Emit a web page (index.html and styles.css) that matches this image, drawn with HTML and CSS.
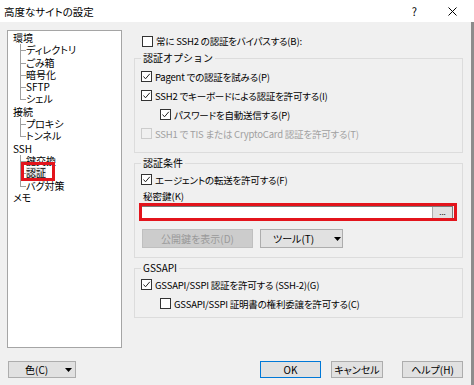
FILE: index.html
```html
<!DOCTYPE html>
<html lang="ja">
<head>
    <meta charset="UTF-8">
    <title>高度なサイトの設定</title>
    <link rel="stylesheet" href="styles.css">
</head>
<body>
    <div class="titlebar">
        <span class="title">高度なサイトの設定</span>
        <span class="help">?</span>
        <svg class="close" width="9" height="9" viewBox="0 0 9 9"><path d="M0.5 0.5L8.5 8.5M8.5 0.5L0.5 8.5" stroke="#000" stroke-width="1"/></svg>
    </div>
    <div class="window">
        <div class="main">
            <div class="tree">
                <div class="node">環境</div>
                <ul class="kids">
                    <li>ディレクトリ</li>
                    <li>ごみ箱</li>
                    <li>暗号化</li>
                    <li>SFTP</li>
                    <li>シェル</li>
                </ul>
                <div class="node">接続</div>
                <ul class="kids">
                    <li>プロキシ</li>
                    <li>トンネル</li>
                </ul>
                <div class="node">SSH</div>
                <ul class="kids">
                    <li>鍵交換</li>
                    <li><span class="sel">認証</span></li>
                    <li>バグ対策</li>
                </ul>
                <div class="node">メモ</div>
            </div>

            <div class="panel">
                <div class="check top-check"><span class="box"></span>常に SSH2 の認証をバイパスする(B):</div>

                <fieldset class="group g1">
                    <legend>認証オプション</legend>
                    <div class="check"><span class="box"><svg viewBox="0 0 9 9"><polyline points="1.5,4.5 3.5,6.8 7.8,1.8"/></svg></span>Pagent での認証を試みる(P)</div>
                    <div class="check"><span class="box"><svg viewBox="0 0 9 9"><polyline points="1.5,4.5 3.5,6.8 7.8,1.8"/></svg></span>SSH2 でキーボードによる認証を許可する(I)</div>
                    <div class="check sub"><span class="box"><svg viewBox="0 0 9 9"><polyline points="1.5,4.5 3.5,6.8 7.8,1.8"/></svg></span>パスワードを自動送信する(P)</div>
                    <div class="check disabled"><span class="box"></span>SSH1 で TIS または CryptoCard 認証を許可する(T)</div>
                </fieldset>

                <fieldset class="group g2">
                    <legend>認証条件</legend>
                    <div class="check"><span class="box"><svg viewBox="0 0 9 9"><polyline points="1.5,4.5 3.5,6.8 7.8,1.8"/></svg></span>エージェントの転送を許可する(F)</div>
                    <div class="field-label">秘密鍵(K)</div>
                    <div class="keyfile">
                        <span class="browse">...</span>
                    </div>
                    <div class="btn-row">
                        <span class="btn btn-off pubkey">公開鍵を表示(D)</span>
                        <span class="btn tools">ツール(T)<svg class="arrow" width="7" height="4" viewBox="0 0 7 4"><polygon points="0,0 7,0 3.5,4"/></svg></span>
                    </div>
                </fieldset>

                <fieldset class="group g3">
                    <legend>GSSAPI</legend>
                    <div class="check"><span class="box"><svg viewBox="0 0 9 9"><polyline points="1.5,4.5 3.5,6.8 7.8,1.8"/></svg></span>GSSAPI/SSPI 認証を許可する (SSH-2)(G)</div>
                    <div class="check sub"><span class="box"></span>GSSAPI/SSPI 証明書の権利委譲を許可する(C)</div>
                </fieldset>
            </div>
        </div>

        <div class="footer">
            <span class="btn color">色(C)<svg class="arrow" width="7" height="4" viewBox="0 0 7 4"><polygon points="0,0 7,0 3.5,4"/></svg></span>
            <span class="btn ok">OK</span>
            <span class="btn cancel">キャンセル</span>
            <span class="btn helpbtn">ヘルプ(H)</span>
        </div>
    </div>
</body>
</html>
```

FILE: styles.css
```css
* {
    box-sizing: border-box;
}
body {
    margin: 0;
    width: 474px;
    height: 385px;
    overflow: hidden;
    background-color: #f0f0f0;
    font-family: "Noto Sans CJK JP", "Liberation Sans", sans-serif;
    font-size: 10px;
    font-feature-settings: "palt";
    color: #000;
}
.titlebar {
    height: 22px;
    background-color: #fff;
    display: flex;
    align-items: center;
    padding: 0 17px 0 4px;
}
.title {
    flex: 1;
    font-size: 10.5px;
}
.help {
    font-size: 11px;
    margin-right: 31px;
}
.window {
    height: 363px;
    border-right: 3px solid #8c8c8c;
}
.main {
    display: flex;
    padding: 8px 0 0 7px;
}

/* tree */
.tree {
    width: 115px;
    height: 318px;
    background-color: #fff;
    border: 1px solid #a5a5a5;
    padding: 1px 0 0 5px;
}
.tree .node,
.kids li {
    height: 12.3px;
    line-height: 12.3px;
    white-space: nowrap;
}
.kids {
    list-style: none;
    margin: 0;
    padding: 0;
}
.kids li {
    position: relative;
    padding-left: 13px;
}
.kids li::before {
    content: "";
    position: absolute;
    left: 7px;
    top: 0;
    width: 5px;
    height: 6px;
    border-left: 1px solid #a0a0a0;
    border-bottom: 1px solid #a0a0a0;
}
.kids li:not(:last-child)::after {
    content: "";
    position: absolute;
    left: 7px;
    top: 6px;
    bottom: 0;
    border-left: 1px solid #a0a0a0;
}
.sel {
    display: inline-block;
    position: relative;
    height: 12.3px;
    background-color: #e8e8e8;
}
.sel::after {
    content: "";
    position: absolute;
    top: -5px;
    bottom: -1px;
    left: -5px;
    right: -9px;
    border: 3px solid #e3141c;
}

/* right panel */
.panel {
    margin-left: 12px;
    width: 329px;
}
.check {
    display: flex;
    align-items: center;
    gap: 3px;
    height: 19px;
    white-space: nowrap;
    font-size: 9.5px;
    letter-spacing: -0.2px;
}
.check.sub {
    padding-left: 19px;
}
.top-check {
    height: 14px;
    margin-top: 4px;
    padding-left: 8px;
}
.box {
    flex: none;
    width: 11px;
    height: 11px;
    border: 1px solid #333;
    background-color: #fff;
    display: flex;
}
.box svg {
    width: 9px;
    height: 9px;
    fill: none;
    stroke: #222;
    stroke-width: 1;
}
.check.disabled {
    color: #a0a0a0;
}
.check.disabled .box {
    border-color: #cccccc;
    background-color: #f0f0f0;
}
.group {
    margin: 3px 0 0;
    padding: 0 6px;
    border: 1px solid #dcdcdc;
    min-width: 0;
}
.group legend {
    padding: 0 2px;
    line-height: 14px;
    font-feature-settings: normal;
}
.g1 {
    padding-top: 2px;
    padding-bottom: 9px;
}
.g2 {
    padding-bottom: 9px;
}
.g3 {
    padding-bottom: 4px;
}
.field-label {
    height: 14px;
    line-height: 14px;
    padding-left: 2px;
    font-size: 9.5px;
}
.keyfile {
    position: relative;
    margin: 3px 0 0 -1px;
    width: 313px;
    height: 14px;
    background-color: #fff;
    border: 1px solid #7a7a7a;
    display: flex;
    justify-content: flex-end;
}
.keyfile::after {
    content: "";
    position: absolute;
    top: -4px;
    bottom: -2px;
    left: -2px;
    right: -5px;
    border: 3px solid #e3141c;
}
.browse {
    width: 20px;
    height: 12px;
    background-color: #e1e1e1;
    border-left: 1px solid #adadad;
    font-size: 8px;
    line-height: 10px;
    text-align: center;
}
.btn-row {
    display: flex;
    margin-top: 9px;
}
.btn {
    height: 19px;
    display: flex;
    align-items: center;
    justify-content: center;
    background-color: #e1e1e1;
    border: 1px solid #adadad;
    white-space: nowrap;
}
.btn .arrow {
    fill: #000;
}
.btn-off {
    background-color: #cccccc;
    border-color: #bfbfbf;
    color: #9a9a9a;
}
.pubkey {
    width: 111px;
    margin-left: 1px;
}
.tools {
    width: 83px;
    margin-left: 7px;
    justify-content: flex-start;
    padding-left: 12px;
}
.tools .arrow {
    margin-left: 20px;
}

/* footer buttons */
.footer {
    display: flex;
    padding: 13px 8px 0 8px;
}
.footer .btn {
    height: 17px;
}
.color {
    width: 68px;
    justify-content: flex-start;
    padding-left: 16px;
}
.color .arrow {
    margin-left: 17px;
}
.ok {
    width: 61px;
    margin-left: auto;
    border-color: #0078d7;
}
.cancel {
    width: 52px;
    margin-left: 10px;
}
.helpbtn {
    width: 61px;
    margin-left: 19px;
}
```
